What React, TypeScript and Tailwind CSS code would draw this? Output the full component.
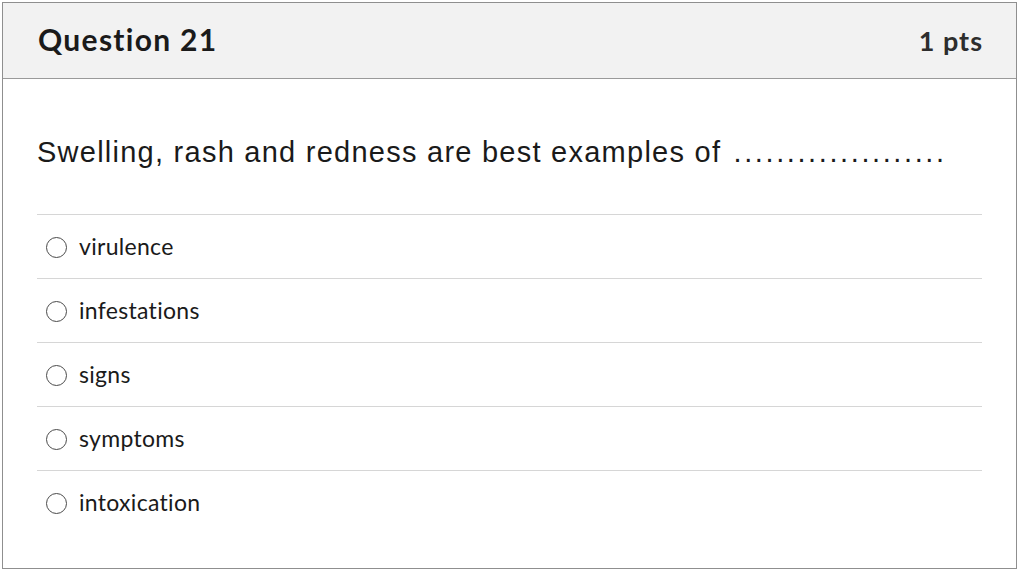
export default function App() {
    const answers = ['virulence', 'infestations', 'signs', 'symptoms', 'intoxication']

    return (
        <div className="w-[1024px] h-[570px] bg-white pt-[2px] pl-[2px]">
            <div className="w-[1015px] h-[567px] border border-[#8f8f8f] flex flex-col">
                <div className="h-[76px] bg-[#f2f2f2] border-b border-[#9a9a9a] flex items-center justify-between pl-[35px] pr-[34px]">
                    <h2 className="font-['Lato'] font-bold text-[30px] text-[#1a1a1a] tracking-[1.3px] leading-none -mt-[3px]">Question 21</h2>
                    <span className="font-['Lato'] font-bold text-[27px] text-[#2d2d2d] tracking-[1px] leading-none -mr-[1px]">1 pts</span>
                </div>
                <div className="flex flex-col px-[34px]">
                    <p className="font-['Liberation_Sans'] text-[29px] text-[#1a1a1a] tracking-[1.25px] leading-none pt-[59px] pb-[47px]">
                        Swelling, rash and redness are best examples of <span className="tracking-[2.6px] ml-[3px]">....................</span>
                    </p>
                    <div className="flex flex-col">
                        {answers.map((a, i) => (
                            <div key={i} className="h-[64px] border-t border-[#d6d6d6] flex items-center pl-[9px] gap-[12px]">
                                <span className="w-[21px] h-[21px] rounded-full border-[1.5px] border-[#4a4a4a] shrink-0 mt-[2px]" />
                                <span className="font-['Lato'] text-[23px] text-[#1a1a1a] tracking-[0.3px] leading-none">{a}</span>
                            </div>
                        ))}
                    </div>
                </div>
            </div>
        </div>
    )
}
